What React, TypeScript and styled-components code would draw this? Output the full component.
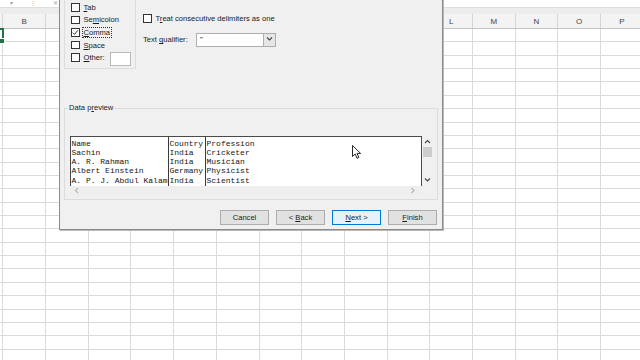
import React from "react";
import styled, { createGlobalStyle } from "styled-components";

const COLUMNS = ["A", "B", "C", "D", "E", "F", "G", "H", "I", "J", "K", "L", "M", "N", "O", "P"];
const ROW_COUNT = 25;

const PREVIEW = [
  ["Name", "Country", "Profession"],
  ["Sachin", "India", "Cricketer"],
  ["A. R. Rahman", "India", "Musician"],
  ["Albert Einstein", "Germany", "Physicist"],
  ["A. P. J. Abdul Kalam", "India", "Scientist"],
];

const GlobalStyle = createGlobalStyle`
  * { box-sizing: border-box; }
  body {
    margin: 0;
    font-family: "Liberation Sans", Arial, sans-serif;
    background: #ffffff;
  }
`;

const Page = styled.div`
  position: relative;
  width: 640px;
  height: 360px;
  overflow: hidden;
  background: #ffffff;
`;

/* ---------- spreadsheet ---------- */

const FormulaBar = styled.div`
  display: flex;
  align-items: center;
  height: 8px;
  background: #ffffff;
  border-bottom: 1px solid #dedede;
  color: #a0a0a0;
  font-size: 6px;
  line-height: 7px;
  & > span {
    display: block;
    width: 22px;
    text-align: center;
  }
`;

const Band = styled.div`
  height: 6px;
  background: #ececec;
`;

const ColumnRow = styled.div`
  display: grid;
  grid-template-columns: 3.4px repeat(15, 42.7px);
  height: 15px;
  background: #f3f3f3;
  border-bottom: 1px solid #c4c4c4;
`;

const ColumnHead = styled.div`
  display: flex;
  align-items: center;
  justify-content: center;
  border-right: 1px solid #d6d6d6;
  font-size: 8px;
  color: #444444;
  overflow: hidden;
`;

const SheetRow = styled.div`
  display: grid;
  grid-template-columns: 3.4px repeat(15, 42.7px);
  height: 13.37px;
`;

const Cell = styled.div`
  border-right: 1px solid #dadada;
  border-bottom: 1px solid #dadada;
`;

const Selection = styled.div`
  position: absolute;
  left: -2px;
  top: 28px;
  width: 6px;
  height: 15px;
  border: 2px solid #217346;
  &::after {
    content: "";
    position: absolute;
    right: -3px;
    bottom: -3px;
    width: 4px;
    height: 4px;
    background: #217346;
    border: 1px solid #ffffff;
  }
`;

/* ---------- dialog ---------- */

const Dialog = styled.div`
  position: absolute;
  left: 59px;
  top: -11px;
  width: 384px;
  height: 241px;
  display: flex;
  flex-direction: column;
  padding: 0 5px 0 4px;
  background: #f0f0f0;
  border: 1px solid #8a8a8a;
  box-shadow: 1px 1px 0 #b8b8b8;
  color: #1b1b1b;
  font-size: 7.6px;
`;

const TopSection = styled.div`
  display: flex;
`;

const Delimiters = styled.div`
  width: 72px;
  height: 79px;
  padding: 10px 0 0 6px;
  border: 1px solid #dcdcdc;
`;

const CheckRow = styled.div`
  display: flex;
  align-items: center;
  height: 12.6px;
  gap: 2px;
`;

const Box = styled.span`
  display: flex;
  align-items: center;
  justify-content: center;
  width: 8.5px;
  height: 8.5px;
  flex: none;
  background: #ffffff;
  border: 1px solid #333333;
`;

const Label = styled.span<{ $focused?: boolean }>`
  padding: 0 1px;
  line-height: 9px;
  white-space: nowrap;
  border: 1px dotted ${(p) => (p.$focused ? "#333333" : "transparent")};
`;

const Key = styled.span`
  text-decoration: underline;
`;

const OtherInput = styled.span`
  display: block;
  width: 21px;
  height: 14px;
  margin: 2px 0 0 1px;
  background: #ffffff;
  border: 1px solid #b9b9b9;
`;

const Options = styled.div`
  display: flex;
  flex-direction: column;
  margin: 22px 0 0 7px;
`;

const QualifierRow = styled.div`
  display: flex;
  align-items: center;
  height: 14px;
  margin-top: 8px;
`;

const QualifierLabel = styled.span`
  width: 53px;
  white-space: nowrap;
`;

const Combo = styled.div`
  display: flex;
  width: 80px;
  height: 14px;
  background: #ffffff;
  border: 1px solid #adadad;
`;

const ComboValue = styled.span`
  flex: 1;
  padding: 1px 0 0 3px;
  font-size: 8px;
`;

const ComboButton = styled.span`
  display: flex;
  align-items: center;
  justify-content: center;
  width: 12px;
  background: #e6e6e6;
  border-left: 1px solid #adadad;
`;

const Group = styled.div`
  display: flex;
  flex-direction: column;
  width: 374px;
  margin-top: 39px;
  padding: 0 5px 4px 5px;
  border: 1px solid #dcdcdc;
`;

const Caption = styled.span`
  align-self: flex-start;
  margin: -6px 0 0 -2px;
  padding: 0 1px;
  line-height: 10px;
  background: #f0f0f0;
`;

const Preview = styled.div`
  display: grid;
  grid-template-columns: 352px 11px;
  grid-template-rows: 50px 9px;
  margin-top: 23px;
`;

const PreviewBody = styled.div`
  display: flex;
  background: #ffffff;
  border: 1px solid #4a4a4a;
  border-bottom: none;
  font-family: "Liberation Mono", "Courier New", monospace;
  font-size: 8px;
  color: #161616;
  overflow: hidden;
`;

const PreviewColumn = styled.div<{ $width?: number; $last?: boolean }>`
  display: flex;
  flex-direction: column;
  flex: ${(p) => (p.$last ? "1" : "none")};
  width: ${(p) => (p.$width ? `${p.$width}px` : "auto")};
  padding: 1.5px 0 0 0.5px;
  border-right: ${(p) => (p.$last ? "none" : "1px solid #3a3a3a")};
  & > span {
    height: 9.3px;
    line-height: 9.3px;
    white-space: pre;
  }
`;

const VScroll = styled.div`
  display: flex;
  flex-direction: column;
  align-items: center;
  justify-content: space-between;
  padding: 3px 0 2px;
  background: #f0f0f0;
`;

const Thumb = styled.span`
  display: block;
  width: 9px;
  height: 10px;
  margin-top: 1px;
  margin-bottom: auto;
  background: #cdcdcd;
`;

const HScroll = styled.div`
  display: flex;
  align-items: center;
  justify-content: space-between;
  padding: 0 5px 0 4px;
  background: #eeeeee;
`;

const ButtonRow = styled.div`
  display: flex;
  justify-content: flex-end;
  gap: 7px;
  margin-top: 10px;
`;

const Button = styled.button<{ $default?: boolean }>`
  width: 49px;
  height: 15px;
  padding: 0;
  font-family: inherit;
  font-size: 7.6px;
  color: #1b1b1b;
  background: ${(p) => (p.$default ? "#e5f1fb" : "#e1e1e1")};
  border: 1px solid ${(p) => (p.$default ? "#0078d7" : "#adadad")};
  border-radius: 0;
`;

const Cursor = styled.svg`
  position: absolute;
  left: 352px;
  top: 145px;
`;

const Chevron = ({ dir }: { dir: "up" | "down" | "left" | "right" }) => {
  const d = {
    up: "M1 4 L3.5 1.5 L6 4",
    down: "M1 1.5 L3.5 4 L6 1.5",
    left: "M4 1 L1.5 3.5 L4 6",
    right: "M1.5 1 L4 3.5 L1.5 6",
  }[dir];
  const faint = dir === "left" || dir === "right";
  return (
    <svg width="7" height="7" viewBox="0 0 7 7">
      <path d={d} fill="none" stroke={faint ? "#b5b5b5" : "#444"} strokeWidth="1.1" />
    </svg>
  );
};

const Check = ({ checked }: { checked?: boolean }) => (
  <Box>
    {checked && (
      <svg width="7" height="7" viewBox="0 0 7 7">
        <path d="M0.8 3.6 L2.7 5.5 L6.2 1.2" fill="none" stroke="#222" strokeWidth="1" />
      </svg>
    )}
  </Box>
);

const Spreadsheet = () => (
  <>
    <FormulaBar>
      <span>▾</span>
      <span>⋮</span>
      <span>✕</span>
    </FormulaBar>
    <Band />
    <ColumnRow>
      {COLUMNS.map((c) => (
        <ColumnHead key={c}>{c === "A" ? "" : c}</ColumnHead>
      ))}
    </ColumnRow>
    {Array.from({ length: ROW_COUNT }).map((_, r) => (
      <SheetRow key={r}>
        {COLUMNS.map((c) => (
          <Cell key={c} />
        ))}
      </SheetRow>
    ))}
    <Selection />
  </>
);

const ImportDialog = () => (
  <Dialog>
    <TopSection>
      <Delimiters>
        <CheckRow>
          <Check />
          <Label>
            <Key>T</Key>ab
          </Label>
        </CheckRow>
        <CheckRow>
          <Check />
          <Label>
            Se<Key>m</Key>icolon
          </Label>
        </CheckRow>
        <CheckRow>
          <Check checked />
          <Label $focused>
            <Key>C</Key>omma
          </Label>
        </CheckRow>
        <CheckRow>
          <Check />
          <Label>
            <Key>S</Key>pace
          </Label>
        </CheckRow>
        <CheckRow>
          <Check />
          <Label>
            <Key>O</Key>ther:
          </Label>
          <OtherInput />
        </CheckRow>
      </Delimiters>
      <Options>
        <CheckRow>
          <Check />
          <Label>
            T<Key>r</Key>eat consecutive delimiters as one
          </Label>
        </CheckRow>
        <QualifierRow>
          <QualifierLabel>
            Text <Key>q</Key>ualifier:
          </QualifierLabel>
          <Combo>
            <ComboValue>"</ComboValue>
            <ComboButton>
              <Chevron dir="down" />
            </ComboButton>
          </Combo>
        </QualifierRow>
      </Options>
    </TopSection>

    <Group>
      <Caption>
        Data p<Key>r</Key>eview
      </Caption>
      <Preview>
        <PreviewBody>
          <PreviewColumn $width={98}>
            {PREVIEW.map((row, i) => (
              <span key={i}>{row[0]}</span>
            ))}
          </PreviewColumn>
          <PreviewColumn $width={37}>
            {PREVIEW.map((row, i) => (
              <span key={i}>{row[1]}</span>
            ))}
          </PreviewColumn>
          <PreviewColumn $last>
            {PREVIEW.map((row, i) => (
              <span key={i}>{row[2]}</span>
            ))}
          </PreviewColumn>
        </PreviewBody>
        <VScroll>
          <Chevron dir="up" />
          <Thumb />
          <Chevron dir="down" />
        </VScroll>
        <HScroll>
          <Chevron dir="left" />
          <Chevron dir="right" />
        </HScroll>
      </Preview>
    </Group>

    <ButtonRow>
      <Button>Cancel</Button>
      <Button>
        &lt; <Key>B</Key>ack
      </Button>
      <Button $default>
        <Key>N</Key>ext &gt;
      </Button>
      <Button>
        <Key>F</Key>inish
      </Button>
    </ButtonRow>
  </Dialog>
);

const App = () => (
  <Page>
    <GlobalStyle />
    <Spreadsheet />
    <ImportDialog />
    <Cursor width="10" height="15" viewBox="0 0 10 15">
      <path
        d="M0.5 0.5 L0.5 11.5 L3.2 9 L5 13.3 L6.8 12.5 L5.1 8.4 L8.6 8.4 Z"
        fill="#ffffff"
        stroke="#111111"
        strokeWidth="0.9"
        strokeLinejoin="round"
      />
    </Cursor>
  </Page>
);

export default App;
